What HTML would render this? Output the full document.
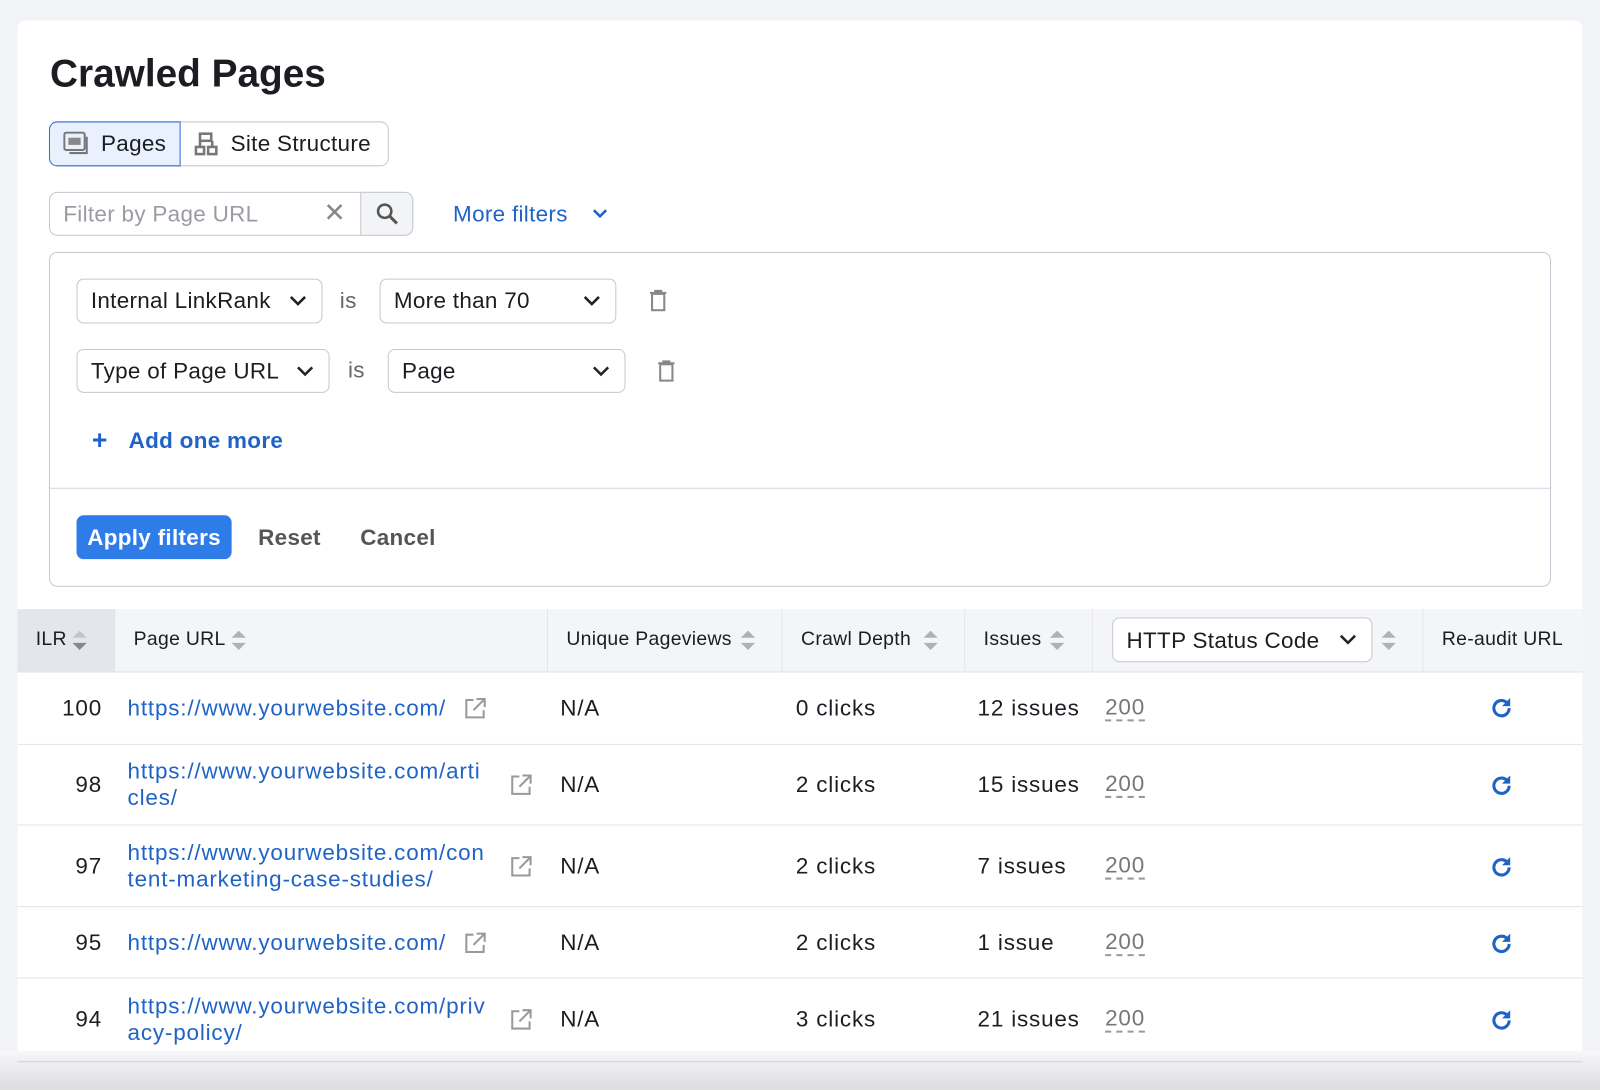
<!DOCTYPE html>
<html><head><style>
*{box-sizing:border-box;margin:0;padding:0}
html,body{width:1600px;height:1068px;overflow:hidden}
body{background:#f2f3f7;font-family:"Liberation Sans",Arial,sans-serif;color:#1c1d22}
#w{position:absolute;left:0;top:0;width:1568px;height:1047px;transform:scale(1.0204);transform-origin:0 0;letter-spacing:0.3px}
.card{position:absolute;left:17px;top:20px;width:1534px;height:1022px;background:#fff;border-radius:8px}
.a{position:absolute;white-space:nowrap}
h1{position:absolute;left:49px;top:52px;font-size:38px;font-weight:700;color:#1c1d22;letter-spacing:0}
.btn{position:absolute;border:1px solid #c5c8d0;border-radius:8px;background:#fff}
.sel{position:absolute;border:1px solid #c5c8d0;border-radius:7px;background:#fff;font-size:22px;padding-left:13px;line-height:42px}
.chev{position:absolute;right:14px;top:14px}
.blue{color:#1f63c7}
.th{position:absolute;top:597px;height:62px;background:#f4f5f8;border-right:1px solid #e2e4ea;border-bottom:1px solid #dfe1e7;font-size:19px;line-height:60px;padding-left:18px}
.row{position:absolute;left:17px;width:1534px;border-bottom:1px solid #e2e4ea}
.c{position:absolute;font-size:22px;white-space:nowrap;letter-spacing:0.8px}
.code{border-bottom:2px dashed #999;color:#777;line-height:24px}
</style></head><body><div id="w">
<div class="card"></div>
<h1>Crawled Pages</h1>
<div class="btn" style="left:48px;top:119px;width:333px;height:44px;"></div>
<div class="a" style="left:48px;top:119px;width:129px;height:44px;background:#e8f1fd;border:1px solid #2b6ed6;border-radius:8px 0 0 8px"></div>
<svg class="a" style="left:62px;top:129px" width="26" height="24" viewBox="0 0 26 24"><rect x="1" y="1" width="20" height="17" rx="2" fill="none" stroke="#777" stroke-width="2"/><rect x="5" y="6" width="12" height="7" fill="#888"/><path d="M23 5v16H6" stroke="#777" stroke-width="2" fill="none"/></svg>
<div class="a" style="left:99px;top:128px;font-size:22px">Pages</div>
<svg class="a" style="left:190px;top:129px" width="24" height="24" viewBox="0 0 24 24"><g fill="none" stroke="#777" stroke-width="2.5"><rect x="6" y="2" width="11" height="7"/><rect x="2" y="15" width="8" height="7"/><rect x="14" y="15" width="8" height="7"/><path d="M6 9v6M18 9v6"/></g></svg>
<div class="a" style="left:226px;top:128px;font-size:22px">Site Structure</div>

<div class="btn" style="left:48px;top:188px;width:357px;height:43px;"></div>
<div class="a" style="left:353px;top:188px;width:52px;height:43px;background:#f3f4f6;border:1px solid #c5c8d0;border-radius:0 8px 8px 0"></div>
<div class="a" style="left:62px;top:197px;font-size:22px;color:#9a9ca3">Filter by Page URL</div>
<div class="a" style="left:317px;top:193px;font-size:26px;color:#888">✕</div>
<svg class="a" style="left:368px;top:198px" width="24" height="24" viewBox="0 0 24 24"><circle cx="9" cy="9" r="6.5" fill="none" stroke="#555" stroke-width="2.5"/><path d="M14 14l7 7" stroke="#555" stroke-width="3"/></svg>
<div class="a blue" style="left:444px;top:197px;font-size:22px">More filters</div>
<svg class="a" style="left:580px;top:204px" width="16" height="12"><path d="M2 2l6 6 6-6" stroke="#1f63c7" stroke-width="2.5" fill="none"/></svg>

<div class="a" style="left:48px;top:247px;width:1472px;height:328px;border:1px solid #c5c8d0;border-radius:8px"></div>
<div class="a" style="left:49px;top:478px;width:1470px;height:1px;background:#d5d7dd"></div>

<div class="sel" style="left:75px;top:273px;width:241px;height:44px">Internal LinkRank<svg class="chev" width="18" height="14"><path d="M2 3l7 7 7-7" stroke="#222" stroke-width="2.5" fill="none"/></svg></div>
<div class="a" style="left:333px;top:282px;font-size:22px;color:#666">is</div>
<div class="sel" style="left:372px;top:273px;width:232px;height:44px">More than 70<svg class="chev" width="18" height="14"><path d="M2 3l7 7 7-7" stroke="#222" stroke-width="2.5" fill="none"/></svg></div>
<svg class="a" style="left:636px;top:284px" width="18" height="22"><g fill="none" stroke="#888" stroke-width="2"><path d="M1 3h16M6 3V1h6v2"/><rect x="3" y="4" width="12" height="16"/></g></svg>

<div class="sel" style="left:75px;top:342px;width:248px;height:43px">Type of Page URL<svg class="chev" width="18" height="14"><path d="M2 3l7 7 7-7" stroke="#222" stroke-width="2.5" fill="none"/></svg></div>
<div class="a" style="left:341px;top:350px;font-size:22px;color:#666">is</div>
<div class="sel" style="left:380px;top:342px;width:233px;height:43px">Page<svg class="chev" width="18" height="14"><path d="M2 3l7 7 7-7" stroke="#222" stroke-width="2.5" fill="none"/></svg></div>
<svg class="a" style="left:644px;top:353px" width="18" height="22"><g fill="none" stroke="#888" stroke-width="2"><path d="M1 3h16M6 3V1h6v2"/><rect x="3" y="4" width="12" height="16"/></g></svg>

<div class="a blue" style="left:90px;top:416px;font-size:26px;font-weight:700">+</div>
<div class="a blue" style="left:126px;top:419px;font-size:22px;font-weight:700">Add one more</div>

<div class="a" style="left:75px;top:505px;width:152px;height:43px;background:#2e7ce8;border-radius:7px;color:#fff;font-size:22px;text-align:center;line-height:43px;font-weight:700">Apply filters</div>
<div class="a" style="left:253px;top:514px;font-size:22px;color:#555;font-weight:700">Reset</div>
<div class="a" style="left:353px;top:514px;font-size:22px;color:#555;font-weight:700">Cancel</div>

<div class="th" style="left:17px;width:96px;background:#e5e6eb">ILR</div>
<div class="th" style="left:113px;width:424px">Page URL</div>
<div class="th" style="left:537px;width:230px">Unique Pageviews</div>
<div class="th" style="left:767px;width:179px">Crawl Depth</div>
<div class="th" style="left:946px;width:125px">Issues</div>
<div class="th" style="left:1071px;width:324px"></div>
<div class="th" style="left:1395px;width:156px;border-right:none">Re-audit URL</div>
<svg class="a" style="left:70px;top:617px" width="16" height="22"><path d="M1 8l7-7 7 7z" fill="#c3c5cc"/><path d="M1 13l7 7 7-7z" fill="#888"/></svg>
<svg class="a" style="left:226px;top:617px" width="16" height="22"><path d="M1 8l7-7 7 7zM1 13l7 7 7-7z" fill="#aeb1b8"/></svg>
<svg class="a" style="left:725px;top:617px" width="16" height="22"><path d="M1 8l7-7 7 7zM1 13l7 7 7-7z" fill="#aeb1b8"/></svg>
<svg class="a" style="left:904px;top:617px" width="16" height="22"><path d="M1 8l7-7 7 7zM1 13l7 7 7-7z" fill="#aeb1b8"/></svg>
<svg class="a" style="left:1028px;top:617px" width="16" height="22"><path d="M1 8l7-7 7 7zM1 13l7 7 7-7z" fill="#aeb1b8"/></svg>
<svg class="a" style="left:1353px;top:617px" width="16" height="22"><path d="M1 8l7-7 7 7zM1 13l7 7 7-7z" fill="#aeb1b8"/></svg>
<div class="sel" style="left:1090px;top:605px;width:255px;height:44px;font-size:22px;line-height:43px">HTTP Status Code<svg class="chev" width="18" height="14"><path d="M2 3l7 7 7-7" stroke="#222" stroke-width="2.5" fill="none"/></svg></div>

<div class="row" style="top:659px;height:71px"></div>
<div class="row" style="top:730px;height:79px"></div>
<div class="row" style="top:809px;height:80px"></div>
<div class="row" style="top:889px;height:70px"></div>
<div class="row" style="top:959px;height:82px"></div>
<div class="a" style="left:0;top:1030px;width:1600px;height:38px;background:linear-gradient(#f7f7f9,#dcdde0)"></div>
<div class="a" style="left:17px;top:1040px;width:1534px;height:1px;background:#cfd1d6"></div>

<div class="c" style="right:1468px;top:681px">100</div>
<div class="c blue" style="left:125px;top:681px">https://www.yourwebsite.com/</div>
<div class="c" style="right:1468px;top:756px">98</div>
<div class="c blue" style="left:125px;top:743px;line-height:26px">https://www.yourwebsite.com/arti<br>cles/</div>
<div class="c" style="right:1468px;top:836px">97</div>
<div class="c blue" style="left:125px;top:823px;line-height:26px">https://www.yourwebsite.com/con<br>tent-marketing-case-studies/</div>
<div class="c" style="right:1468px;top:911px">95</div>
<div class="c blue" style="left:125px;top:911px">https://www.yourwebsite.com/</div>
<div class="c" style="right:1468px;top:986px">94</div>
<div class="c blue" style="left:125px;top:973px;line-height:26px">https://www.yourwebsite.com/priv<br>acy-policy/</div>

<svg class="a" style="left:455px;top:683px" width="22" height="22"><g fill="none" stroke="#999" stroke-width="2"><path d="M9 3H2v17h17v-7"/><path d="M12 2h8v8M20 2L9 13"/></g></svg>
<svg class="a" style="left:500px;top:758px" width="22" height="22"><g fill="none" stroke="#999" stroke-width="2"><path d="M9 3H2v17h17v-7"/><path d="M12 2h8v8M20 2L9 13"/></g></svg>
<svg class="a" style="left:500px;top:838px" width="22" height="22"><g fill="none" stroke="#999" stroke-width="2"><path d="M9 3H2v17h17v-7"/><path d="M12 2h8v8M20 2L9 13"/></g></svg>
<svg class="a" style="left:455px;top:913px" width="22" height="22"><g fill="none" stroke="#999" stroke-width="2"><path d="M9 3H2v17h17v-7"/><path d="M12 2h8v8M20 2L9 13"/></g></svg>
<svg class="a" style="left:500px;top:988px" width="22" height="22"><g fill="none" stroke="#999" stroke-width="2"><path d="M9 3H2v17h17v-7"/><path d="M12 2h8v8M20 2L9 13"/></g></svg>

<div class="c" style="left:549px;top:681px">N/A</div><div class="c" style="left:780px;top:681px">0 clicks</div><div class="c" style="left:958px;top:681px">12 issues</div><div class="c code" style="left:1083px;top:681px">200</div>
<div class="c" style="left:549px;top:756px">N/A</div><div class="c" style="left:780px;top:756px">2 clicks</div><div class="c" style="left:958px;top:756px">15 issues</div><div class="c code" style="left:1083px;top:756px">200</div>
<div class="c" style="left:549px;top:836px">N/A</div><div class="c" style="left:780px;top:836px">2 clicks</div><div class="c" style="left:958px;top:836px">7 issues</div><div class="c code" style="left:1083px;top:836px">200</div>
<div class="c" style="left:549px;top:911px">N/A</div><div class="c" style="left:780px;top:911px">2 clicks</div><div class="c" style="left:958px;top:911px">1 issue</div><div class="c code" style="left:1083px;top:911px">200</div>
<div class="c" style="left:549px;top:986px">N/A</div><div class="c" style="left:780px;top:986px">3 clicks</div><div class="c" style="left:958px;top:986px">21 issues</div><div class="c code" style="left:1083px;top:986px">200</div>

<svg class="a" style="left:1460px;top:682px" width="24" height="24" viewBox="0 0 24 24"><path d="M19 12a7.5 7.5 0 1 1-2.2-5.3" fill="none" stroke="#1f63c7" stroke-width="3"/><path d="M20 2v8h-8z" fill="#1f63c7"/></svg>
<svg class="a" style="left:1460px;top:758px" width="24" height="24" viewBox="0 0 24 24"><path d="M19 12a7.5 7.5 0 1 1-2.2-5.3" fill="none" stroke="#1f63c7" stroke-width="3"/><path d="M20 2v8h-8z" fill="#1f63c7"/></svg>
<svg class="a" style="left:1460px;top:838px" width="24" height="24" viewBox="0 0 24 24"><path d="M19 12a7.5 7.5 0 1 1-2.2-5.3" fill="none" stroke="#1f63c7" stroke-width="3"/><path d="M20 2v8h-8z" fill="#1f63c7"/></svg>
<svg class="a" style="left:1460px;top:913px" width="24" height="24" viewBox="0 0 24 24"><path d="M19 12a7.5 7.5 0 1 1-2.2-5.3" fill="none" stroke="#1f63c7" stroke-width="3"/><path d="M20 2v8h-8z" fill="#1f63c7"/></svg>
<svg class="a" style="left:1460px;top:988px" width="24" height="24" viewBox="0 0 24 24"><path d="M19 12a7.5 7.5 0 1 1-2.2-5.3" fill="none" stroke="#1f63c7" stroke-width="3"/><path d="M20 2v8h-8z" fill="#1f63c7"/></svg>
</div></body></html>
